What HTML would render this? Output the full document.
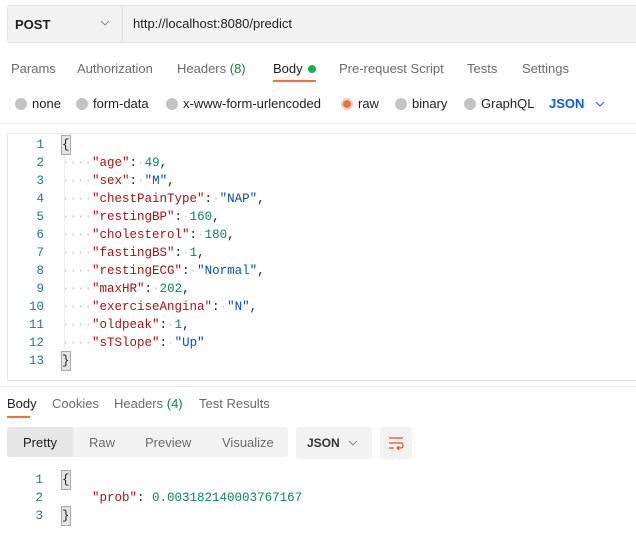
<!DOCTYPE html>
<html><head><style>
*{margin:0;padding:0;box-sizing:border-box}
body{width:636px;height:545px;background:#fff;font-family:"Liberation Sans",sans-serif;font-size:13px;color:#212121;position:relative;overflow:hidden}
.a{position:absolute;white-space:nowrap}
.g{color:#6b6b6b}
.mono{font-family:"Liberation Mono",monospace;font-size:12.5px}
.k{color:#a31515}.s{color:#0451a5}.n{color:#098658}.d{color:#ccc}
.ln{color:#237893;text-align:right;width:20px}
.rad{display:inline-block;width:12px;height:12px;border-radius:50%;background:#c4c4c4;vertical-align:-2px;margin-right:5px}
.br{display:inline-block;background:#e4e4e4;outline:1px solid #aaa}
</style></head><body>
<div class="a" style="left:7px;top:5px;width:640px;height:38px;background:#f2f2f2;border:1px solid #e6e6e6;border-radius:3px"></div>
<div class="a" style="left:122px;top:5px;width:1px;height:38px;background:#e0e0e0"></div>
<div class="a" style="left:15px;top:17px;font-weight:bold">POST</div>
<svg class="a" style="left:100px;top:20px" width="10" height="6"><path d="M1 1 L5 5 L9 1" fill="none" stroke="#888"/></svg>
<div class="a" style="left:133px;top:16px">http://localhost:8080/predict</div>

<div class="a g" style="left:11px;top:61px">Params</div>
<div class="a g" style="left:77px;top:61px">Authorization</div>
<div class="a g" style="left:177px;top:61px">Headers <span style="color:#0a8a3a">(8)</span></div>
<div class="a" style="left:273px;top:61px">Body <span style="display:inline-block;width:8px;height:8px;border-radius:50%;background:#0cb84c;margin-left:2px"></span></div>
<div class="a" style="left:273px;top:80px;width:43px;height:2px;background:#ff6c37"></div>
<div class="a g" style="left:339px;top:61px">Pre-request Script</div>
<div class="a g" style="left:467px;top:61px">Tests</div>
<div class="a g" style="left:522px;top:61px">Settings</div>

<div class="a" style="left:15px;top:96px"><span class="rad"></span>none</div>
<div class="a" style="left:76px;top:96px"><span class="rad"></span>form-data</div>
<div class="a" style="left:166px;top:96px"><span class="rad"></span>x-www-form-urlencoded</div>
<div class="a" style="left:341px;top:96px"><span class="rad" style="background:#ff6c37;box-shadow:inset 0 0 0 2px #ddd"></span>raw</div>
<div class="a" style="left:395px;top:96px"><span class="rad"></span>binary</div>
<div class="a" style="left:464px;top:96px"><span class="rad"></span>GraphQL</div>
<div class="a" style="left:549px;top:96px;color:#0d5fd8;font-weight:bold">JSON</div>
<svg class="a" style="left:595px;top:101px" width="10" height="6"><path d="M1 1 L5 5 L9 1" fill="none" stroke="#0d5fd8"/></svg>

<div class="a" style="left:0;top:123px;width:636px;height:1px;background:#ececec"></div>
<div class="a" style="left:7px;top:133px;width:640px;height:248px;border:1px solid #e6e6e6"></div>
<div class="a" style="left:64px;top:154px;width:1px;height:200px;background:#eee"></div>
<div class="mono">
<div class="a ln" style="left:24px;top:136px;line-height:18px">1<br>2<br>3<br>4<br>5<br>6<br>7<br>8<br>9<br>10<br>11<br>12<br>13</div>
<div class="a" style="left:62px;top:136px;line-height:18px"><span class="br">{</span><br>
<span class="d">····</span><span class="k">"age"</span>:<span class="d">·</span><span class="n">49</span>,<br>
<span class="d">····</span><span class="k">"sex"</span>:<span class="d">·</span><span class="s">"M"</span>,<br>
<span class="d">····</span><span class="k">"chestPainType"</span>:<span class="d">·</span><span class="s">"NAP"</span>,<br>
<span class="d">····</span><span class="k">"restingBP"</span>:<span class="d">·</span><span class="n">160</span>,<br>
<span class="d">····</span><span class="k">"cholesterol"</span>:<span class="d">·</span><span class="n">180</span>,<br>
<span class="d">····</span><span class="k">"fastingBS"</span>:<span class="d">·</span><span class="n">1</span>,<br>
<span class="d">····</span><span class="k">"restingECG"</span>:<span class="d">·</span><span class="s">"Normal"</span>,<br>
<span class="d">····</span><span class="k">"maxHR"</span>:<span class="d">·</span><span class="n">202</span>,<br>
<span class="d">····</span><span class="k">"exerciseAngina"</span>:<span class="d">·</span><span class="s">"N"</span>,<br>
<span class="d">····</span><span class="k">"oldpeak"</span>:<span class="d">·</span><span class="n">1</span>,<br>
<span class="d">····</span><span class="k">"sTSlope"</span>:<span class="d">·</span><span class="s">"Up"</span><br>
<span class="br">}</span></div>
</div>

<div class="a" style="left:0;top:386px;width:636px;height:1px;background:#e6e6e6"></div>
<div class="a" style="left:7px;top:396px">Body</div>
<div class="a" style="left:7px;top:416px;width:23px;height:2px;background:#ff6c37"></div>
<div class="a g" style="left:52px;top:396px">Cookies</div>
<div class="a g" style="left:114px;top:396px">Headers <span style="color:#0a8a3a">(4)</span></div>
<div class="a g" style="left:199px;top:396px">Test Results</div>

<div class="a" style="left:7px;top:427px;width:281px;height:30px;background:#f2f2f2;border-radius:3px"></div>
<div class="a" style="left:7px;top:427px;width:66px;height:30px;background:#e6e6e6;border-radius:3px 0 0 3px"></div>
<div class="a" style="left:23px;top:435px">Pretty</div>
<div class="a g" style="left:89px;top:435px">Raw</div>
<div class="a g" style="left:145px;top:435px">Preview</div>
<div class="a g" style="left:222px;top:435px">Visualize</div>

<div class="a" style="left:296px;top:427px;width:76px;height:32px;background:#f2f2f2;border-radius:3px"></div>
<div class="a" style="left:307px;top:436px;font-weight:bold;font-size:12px;color:#333">JSON</div>
<svg class="a" style="left:348px;top:440px" width="10" height="6"><path d="M1 1 L5 5 L9 1" fill="none" stroke="#888"/></svg>

<div class="a" style="left:380px;top:427px;width:32px;height:32px;background:#f2f2f2;border-radius:3px"></div>
<svg class="a" style="left:388px;top:435px" width="16" height="16"><path d="M1 3 H15 M1 8 H13 Q15 8 15 10.5 Q15 13 13 13 H9 M11 11 L9 13 L11 15 M1 13 H6" fill="none" stroke="#e0521f" stroke-width="1.2"/></svg>

<div class="mono">
<div class="a ln" style="left:23px;top:471px;line-height:18px">1<br>2<br>3</div>
<div class="a" style="left:62px;top:471px;line-height:18px"><span class="br">{</span><br>
&nbsp;&nbsp;&nbsp;&nbsp;<span class="k">"prob"</span>: <span class="n">0.003182140003767167</span><br>
<span class="br">}</span></div>
</div>
</body></html>
